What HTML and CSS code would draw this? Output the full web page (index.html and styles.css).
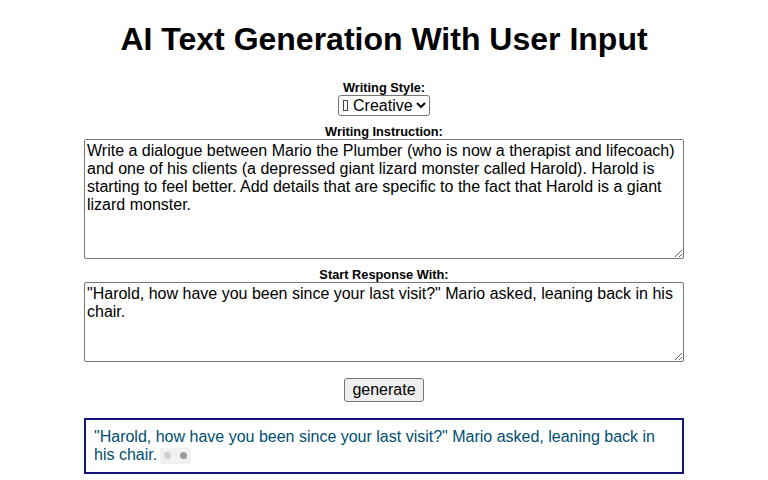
FILE: index.html
```html
<!DOCTYPE html>
<html lang="en">
<head>
<meta charset="utf-8">
<title>AI Text Generation With User Input</title>
<link rel="stylesheet" href="styles.css">
</head>
<body>
<h1 class="title">AI Text Generation With User Input</h1>
<form class="form">
  <label class="label" for="style">Writing Style:</label>
  <div class="select-wrap">
    <select class="select" id="style"><option>Creative</option></select>
    <span class="tofu"></span>
  </div>
  <label class="label label-gap" for="instruction">Writing Instruction:</label>
  <textarea class="area area-tall" id="instruction">Write a dialogue between Mario the Plumber (who is now a therapist and lifecoach) and one of his clients (a depressed giant lizard monster called Harold). Harold is starting to feel better. Add details that are specific to the fact that Harold is a giant lizard monster.</textarea>
  <label class="label label-gap" for="start">Start Response With:</label>
  <textarea class="area area-short" id="start">"Harold, how have you been since your last visit?" Mario asked, leaning back in his chair.</textarea>
  <button class="generate" type="button">generate</button>
</form>
<div class="output">"Harold, how have you been since your last visit?" Mario asked, leaning back in his chair.<span class="typing"><i class="dot dot-light"></i><i class="dot dot-dark"></i></span></div>
</body>
</html>
```
FILE: styles.css
```css
html, body {
  margin: 0;
  padding: 0;
  background: #fff;
}
body {
  font-family: "Liberation Sans", Arial, sans-serif;
  color: #000;
  height: 480px;
  overflow: hidden;
}
.title {
  margin: 0;
  padding: 21px 0 22px;
  font-size: 32px;
  line-height: 37px;
  font-weight: 700;
  text-align: center;
}
.form {
  display: flex;
  flex-direction: column;
  align-items: center;
}
.label {
  display: block;
  font-size: 12.8px;
  line-height: 15px;
  font-weight: 700;
}
.label-gap {
  margin-top: 8px;
}
.select-wrap {
  position: relative;
  display: flex;
}
.select {
  font-family: "Liberation Sans", Arial, sans-serif;
  font-size: 16px;
  width: 92px;
  height: 21px;
  padding: 0 0 0 10px;
  background: #fff;
  color: #000;
  border: 1px solid #767676;
  border-radius: 3px;
}
.tofu {
  position: absolute;
  left: 5px;
  top: 5px;
  box-sizing: border-box;
  width: 5px;
  height: 11px;
  border: 1px solid #444;
  pointer-events: none;
}
.area {
  display: block;
  box-sizing: border-box;
  width: 600px;
  margin: 0;
  padding: 2px;
  font-family: "Liberation Sans", Arial, sans-serif;
  font-size: 16px;
  line-height: 18px;
  color: #000;
  background: #fff;
  border: 1px solid #767676;
  border-radius: 2px;
}
.area-tall {
  height: 120px;
}
.area-short {
  height: 80px;
}
.generate {
  box-sizing: border-box;
  height: 24px;
  margin-top: 16px;
  padding: 1px 7px;
  font-family: "Liberation Sans", Arial, sans-serif;
  font-size: 16px;
  color: #000;
  background: #efefef;
  border: 1px solid #767676;
  border-radius: 3px;
}
.output {
  box-sizing: border-box;
  width: 600px;
  height: 56px;
  margin: 16px auto 0;
  padding: 8px;
  font-size: 16px;
  line-height: 18px;
  color: #004e71;
  border: 2px solid #14147f;
}
.typing {
  display: inline-flex;
  align-items: center;
  gap: 9px;
  height: 16px;
  margin-left: 3px;
  padding: 0 4px;
  vertical-align: 1px;
  background: #f1f1f1;
  border-radius: 2px;
}
.dot {
  display: block;
  width: 7px;
  height: 7px;
  border-radius: 50%;
}
.dot-light {
  background: #cfcfcf;
}
.dot-dark {
  background: #9a9a9a;
}
```
